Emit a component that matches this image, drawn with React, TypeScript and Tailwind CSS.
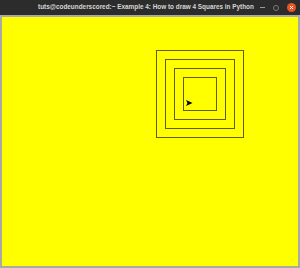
export default function App() {
  return (
    <div className="w-[300px] h-[268px] flex flex-col bg-[#2c2c2c] overflow-hidden">
      <div className="h-[15px] shrink-0 relative flex items-center bg-[#2c2c2c]">
        <span
          className="ml-[38px] text-[6.4px] font-bold text-[#d6d6d6] leading-none whitespace-nowrap"
          style={{ fontFamily: '"Liberation Sans", Arial, sans-serif' }}
        >
          tuts@codeunderscored:~ Example 4: How to draw 4 Squares in Python
        </span>
        <div className="absolute right-[4px] top-0 h-[15px] flex items-center gap-[8px]">
          <div className="w-[5px] h-px bg-[#9a9a9a]" />
          <div className="w-[6px] h-[6px] rounded-full border border-[#7a7a7a]" />
          <div className="w-[9px] h-[9px] rounded-full bg-[#e95420] flex items-center justify-center">
            <svg width="5" height="5" viewBox="0 0 5 5">
              <path d="M1 1 L4 4 M4 1 L1 4" stroke="#fff" strokeWidth="1" />
            </svg>
          </div>
        </div>
      </div>
      <div className="flex-1 border-2 border-[#a9a9a6] bg-[#ffff00] relative">
        <div className="ml-[154px] mt-[33px] w-[88px] h-[88px] border border-[#5e5e14] flex items-center justify-center">
          <div className="w-[70px] h-[70px] border border-[#5e5e14] flex items-center justify-center">
            <div className="w-[52px] h-[52px] border border-[#5e5e14] flex items-center justify-center">
              <div className="w-[34px] h-[34px] border border-[#5e5e14]" />
            </div>
          </div>
        </div>
        <svg
          className="absolute left-[184px] top-[83px]"
          width="7"
          height="6"
          viewBox="0 0 7 6"
        >
          <path d="M0 0 L6.5 3 L0 6 L1.5 3 Z" fill="#000" />
        </svg>
      </div>
    </div>
  );
}
